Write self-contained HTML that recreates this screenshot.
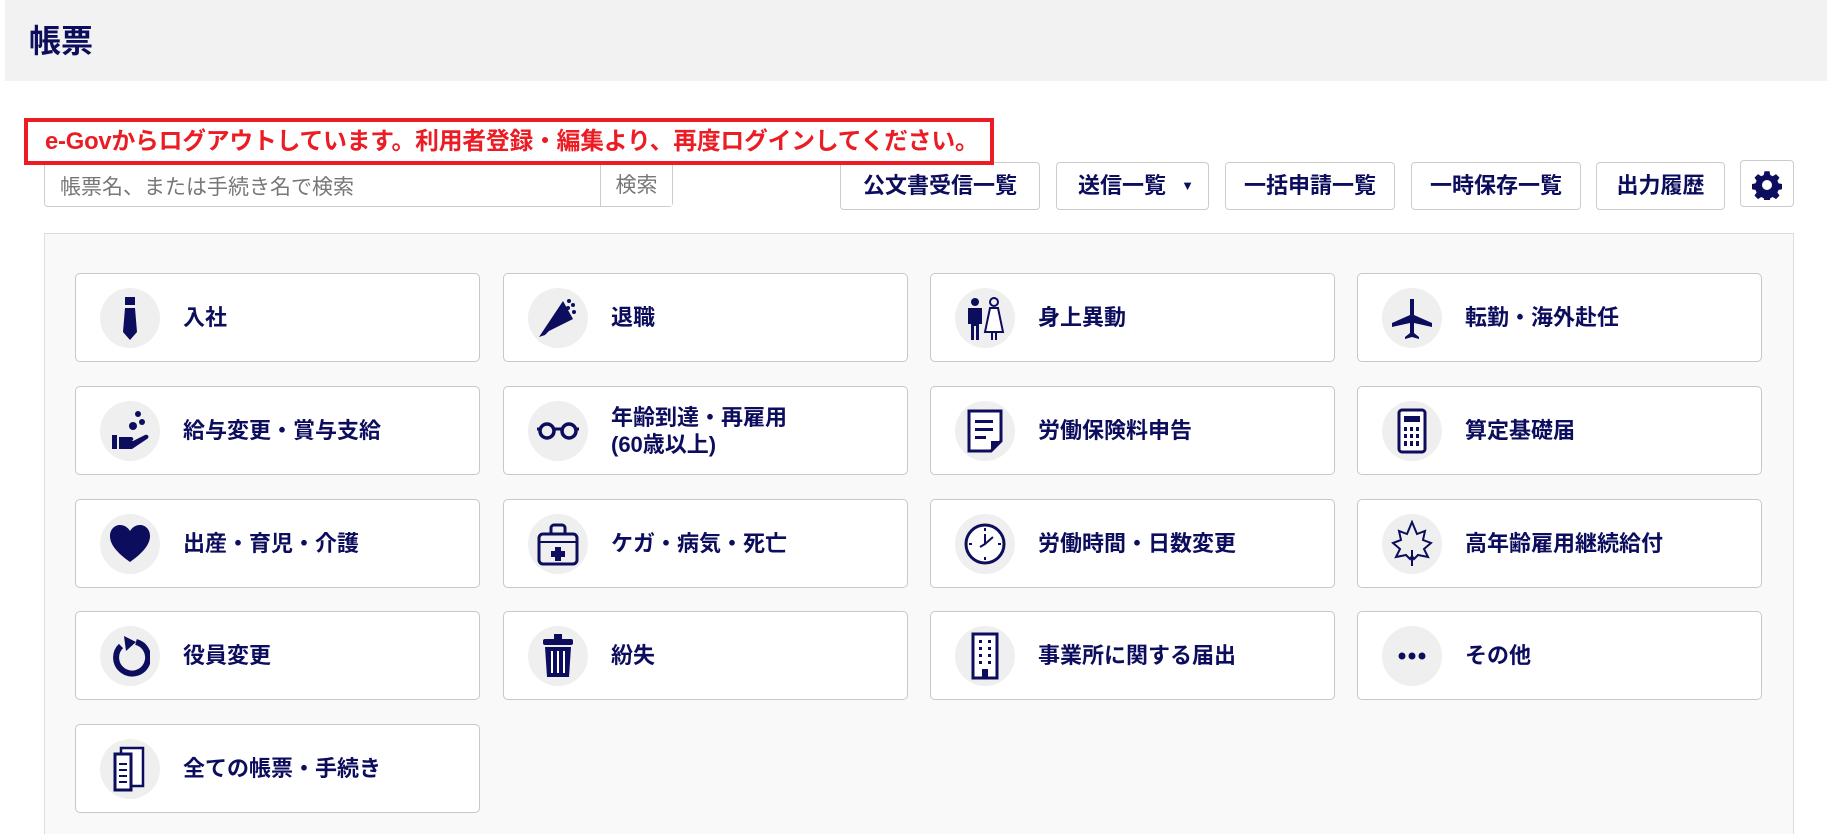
<!DOCTYPE html>
<html><head><meta charset="utf-8"><style>
*{box-sizing:border-box;margin:0;padding:0}
html,body{width:1827px;height:834px;overflow:hidden}
body{background:#fff;font-family:"Liberation Sans","Noto Sans CJK JP",sans-serif;color:#0d0d5e;position:relative}
.hdr{position:absolute;left:5px;top:0;width:1822px;height:81px;background:#f2f2f2}
.hdr h1{position:absolute;left:24px;top:16px;font-size:32px;font-weight:bold;color:#0d0d5e}
.err{position:absolute;left:24px;top:118px;width:970px;height:47px;border:4px solid #ec1c24;color:#ec1c24;font-weight:bold;font-size:23.8px;line-height:39px;padding-left:17px;white-space:nowrap;background:#fff;z-index:2;letter-spacing:-0.2px}
.search{position:absolute;left:44px;top:160px;width:629px;height:47px;border:1px solid #ccc;border-radius:4px;background:#fff}
.search .ph{position:absolute;left:15px;top:10px;font-size:21px;color:#777}
.search .b{position:absolute;left:555px;top:0;width:72px;height:45px;border-left:1px solid #ccc;background:#fff;font-size:21px;color:#777;text-align:center;line-height:50px}
.btn{position:absolute;top:162px;height:48px;border:1px solid #ccc;border-radius:4px;background:#fff;font-size:22px;font-weight:bold;text-align:center;line-height:46px;white-space:nowrap}
.panel{position:absolute;left:44px;top:233px;width:1750px;height:610px;background:#f9f9f9;border:1px solid #ddd}
.card{position:absolute;width:405px;height:89px;background:#fff;border:1px solid #c8c8c8;border-radius:5px}
.card .ic{position:absolute;left:24px;top:14px;width:60px;height:60px;border-radius:50%;background:#efefef;display:flex;align-items:center;justify-content:center}
.card .t{position:absolute;left:107px;top:0;height:87px;display:flex;align-items:center;font-size:22px;font-weight:bold;line-height:27px;white-space:nowrap}
svg{display:block}
</style></head><body>
<div class="hdr"><h1>帳票</h1></div>
<div class="err">e-Govからログアウトしています。利用者登録・編集より、再度ログインしてください。</div>
<div class="search"><span class="ph">帳票名、または手続き名で検索</span><div class="b">検索</div></div>
<div class="btn" style="left:840px;width:200px">公文書受信一覧</div>
<div class="btn" style="left:1056px;width:153px;text-align:left;padding-left:21px">送信一覧<span style="position:absolute;right:14px;top:0;font-size:13px">▼</span></div>
<div class="btn" style="left:1225px;width:170px">一括申請一覧</div>
<div class="btn" style="left:1411px;width:170px">一時保存一覧</div>
<div class="btn" style="left:1596px;width:129px">出力履歴</div>
<div class="btn" style="left:1740px;top:160px;width:54px;height:47px;padding-top:9px"><svg width="30" height="30" viewBox="0 0 24 24" style="margin:auto"><path fill="#0d0d5e" d="M10 1h4l.6 3 2 1 2.6-1.7 2.8 2.8-1.7 2.6 1 2 3 .6v4l-3 .6-1 2 1.7 2.6-2.8 2.8-2.6-1.7-2 1-.6 3h-4l-.6-3-2-1-2.6 1.7-2.8-2.8 1.7-2.6-1-2-3-.6v-4l3-.6 1-2-1.7-2.6 2.8-2.8 2.6 1.7 2-1zM12 8a4 4 0 100 8 4 4 0 000-8z"/></svg></div>
<div class="panel"></div>

<div class="card" style="left:75px;top:273px"><div class="ic"><svg width="30" height="46" viewBox="0 0 30 46"><rect x="10" y="2" width="10" height="8" fill="#0d0d5e"/><path d="M10 13h10l2 24-7 8-7-8z" fill="#0d0d5e"/></svg></div><div class="t">入社</div></div>
<div class="card" style="left:503px;top:273px"><div class="ic"><svg width="46" height="46" viewBox="0 0 46 46"><path d="M28 6 L8 36 L4 42 L10 40 L14 36 L38 24 Z" fill="#0d0d5e"/><circle cx="34" cy="6" r="2" fill="#0d0d5e"/><circle cx="38" cy="10" r="2" fill="#0d0d5e"/><circle cx="33" cy="13" r="2" fill="#0d0d5e"/><circle cx="39" cy="17" r="2" fill="#0d0d5e"/></svg></div><div class="t">退職</div></div>
<div class="card" style="left:930px;top:273px"><div class="ic"><svg width="44" height="48" viewBox="0 0 44 48"><circle cx="12" cy="8" r="4" fill="#0d0d5e"/><path d="M5 14h14v16h-3v16h-3V32h-2v14H8V30H5z" fill="#0d0d5e"/><circle cx="31" cy="8" r="4" fill="none" stroke="#0d0d5e" stroke-width="2"/><path d="M27 14h8l5 24H22z" fill="#fff" stroke="#0d0d5e" stroke-width="2"/><rect x="28" y="38" width="2" height="8" fill="#0d0d5e"/><rect x="32" y="38" width="2" height="8" fill="#0d0d5e"/></svg></div><div class="t">身上異動</div></div>
<div class="card" style="left:1357px;top:273px"><div class="ic"><svg width="46" height="46" viewBox="0 0 46 46"><path d="M21 4h4v16l18 8v4l-18-4v10l5 4v2l-7-2-7 2v-2l5-4V28L3 32v-4l18-8z" fill="#0d0d5e"/></svg></div><div class="t">転勤・海外赴任</div></div>

<div class="card" style="left:75px;top:386px"><div class="ic"><svg width="44" height="44" viewBox="0 0 44 44"><circle cx="30" cy="5" r="3" fill="#0d0d5e"/><circle cx="25" cy="17" r="4" fill="#0d0d5e"/><circle cx="34" cy="13" r="3" fill="#0d0d5e"/><rect x="4" y="26" width="5" height="14" fill="#0d0d5e"/><path d="M11 28h12c3 0 3 4 0 4h-7 9l12-6c3-1 5 2 2 4L24 40H11z" fill="#0d0d5e"/></svg></div><div class="t">給与変更・賞与支給</div></div>
<div class="card" style="left:503px;top:386px"><div class="ic"><svg width="44" height="20" viewBox="0 0 44 20"><circle cx="11" cy="10" r="7" fill="none" stroke="#0d0d5e" stroke-width="3.5"/><circle cx="33" cy="10" r="7" fill="none" stroke="#0d0d5e" stroke-width="3.5"/><path d="M18 8h8M1 8h3M40 8h3" stroke="#0d0d5e" stroke-width="3"/></svg></div><div class="t">年齢到達・再雇用<br>(60歳以上)</div></div>
<div class="card" style="left:930px;top:386px"><div class="ic"><svg width="40" height="46" viewBox="0 0 40 46"><path d="M4 3h32v30L26 43H4z" fill="#fff" stroke="#0d0d5e" stroke-width="3"/><path d="M26 43V33h10" fill="#0d0d5e"/><rect x="10" y="12" width="18" height="3" fill="#0d0d5e"/><rect x="10" y="20" width="18" height="3" fill="#0d0d5e"/><rect x="10" y="28" width="11" height="3" fill="#0d0d5e"/></svg></div><div class="t">労働保険料申告</div></div>
<div class="card" style="left:1357px;top:386px"><div class="ic"><svg width="30" height="46" viewBox="0 0 30 46"><rect x="2" y="2" width="26" height="42" rx="3" fill="#fff" stroke="#0d0d5e" stroke-width="3"/><rect x="7" y="8" width="16" height="6" fill="#0d0d5e"/><g fill="#0d0d5e"><rect x="7" y="19" width="3" height="4"/><rect x="13" y="19" width="3" height="4"/><rect x="19" y="19" width="3" height="4"/><rect x="7" y="26" width="3" height="4"/><rect x="13" y="26" width="3" height="4"/><rect x="19" y="26" width="3" height="4"/><rect x="7" y="33" width="3" height="5"/><rect x="13" y="33" width="3" height="5"/><rect x="19" y="33" width="3" height="5"/></g></svg></div><div class="t">算定基礎届</div></div>

<div class="card" style="left:75px;top:499px"><div class="ic"><svg width="44" height="40" viewBox="0 0 44 40"><path d="M22 38C8 28 2 20 2 12 2 5 7 1 12 1c5 0 8 3 10 6 2-3 5-6 10-6 5 0 10 4 10 11 0 8-6 16-20 26z" fill="#0d0d5e"/></svg></div><div class="t">出産・育児・介護</div></div>
<div class="card" style="left:503px;top:499px"><div class="ic"><svg width="44" height="44" viewBox="0 0 44 44"><rect x="3" y="12" width="38" height="30" rx="4" fill="none" stroke="#0d0d5e" stroke-width="3"/><path d="M15 12V6a3 3 0 013-3h8a3 3 0 013 3v6" fill="none" stroke="#0d0d5e" stroke-width="3"/><path d="M3 20h38" stroke="#0d0d5e" stroke-width="2"/><path d="M19 25h6v4h4v6h-4v4h-6v-4h-4v-6h4z" fill="#0d0d5e"/></svg></div><div class="t">ケガ・病気・死亡</div></div>
<div class="card" style="left:930px;top:499px"><div class="ic"><svg width="44" height="44" viewBox="0 0 44 44"><circle cx="22" cy="22" r="19" fill="#fff" stroke="#0d0d5e" stroke-width="3"/><path d="M22 6v3M22 35v3M6 22h3M35 22h3" stroke="#0d0d5e" stroke-width="2"/><path d="M22 12v10l-5 3M22 22l8-7" fill="none" stroke="#0d0d5e" stroke-width="2"/></svg></div><div class="t">労働時間・日数変更</div></div>
<div class="card" style="left:1357px;top:499px"><div class="ic"><svg width="44" height="48" viewBox="0 0 44 48"><path d="M22 2l5 12 8-3-2 9 8 3-7 6 4 8-10-2-4 4-2-3-2 3-4-4-10 2 4-8-7-6 8-3-2-9 8 3z M22 30v16" fill="none" stroke="#0d0d5e" stroke-width="2"/></svg></div><div class="t">高年齢雇用継続給付</div></div>

<div class="card" style="left:75px;top:611px"><div class="ic"><svg width="40" height="44" viewBox="0 0 40 44"><path d="M11 12A16 16 0 1 0 26 8" fill="none" stroke="#0d0d5e" stroke-width="6"/><path d="M14 2l12 6-10 9z" fill="#0d0d5e"/></svg></div><div class="t">役員変更</div></div>
<div class="card" style="left:503px;top:611px"><div class="ic"><svg width="34" height="46" viewBox="0 0 34 46"><rect x="13" y="1" width="8" height="5" fill="#0d0d5e"/><rect x="2" y="6" width="30" height="6" rx="2" fill="#0d0d5e"/><path d="M4 14h26l-2 30H6z" fill="#0d0d5e"/><path d="M11 18v22M17 18v22M23 18v22" stroke="#fff" stroke-width="2"/></svg></div><div class="t">紛失</div></div>
<div class="card" style="left:930px;top:611px"><div class="ic"><svg width="30" height="48" viewBox="0 0 30 48"><rect x="3" y="2" width="24" height="44" fill="#fff" stroke="#0d0d5e" stroke-width="3"/><g fill="#0d0d5e"><rect x="9" y="8" width="3" height="3"/><rect x="18" y="8" width="3" height="3"/><rect x="9" y="15" width="3" height="3"/><rect x="18" y="15" width="3" height="3"/><rect x="9" y="22" width="3" height="3"/><rect x="18" y="22" width="3" height="3"/><rect x="9" y="29" width="3" height="3"/><rect x="18" y="29" width="3" height="3"/><rect x="12" y="37" width="6" height="9"/></g></svg></div><div class="t">事業所に関する届出</div></div>
<div class="card" style="left:1357px;top:611px"><div class="ic"><svg width="30" height="10" viewBox="0 0 30 10"><circle cx="5" cy="5" r="3.5" fill="#0d0d5e"/><circle cx="15" cy="5" r="3.5" fill="#0d0d5e"/><circle cx="25" cy="5" r="3.5" fill="#0d0d5e"/></svg></div><div class="t">その他</div></div>

<div class="card" style="left:75px;top:724px"><div class="ic"><svg width="38" height="46" viewBox="0 0 38 46"><path d="M10 2h22v38H10z" fill="#fff" stroke="#0d0d5e" stroke-width="2.5"/><path d="M4 8h8l8 0v36H4z" fill="#fff" stroke="#0d0d5e" stroke-width="3"/><path d="M8 18h8M8 24h8M8 30h8M8 36h8" stroke="#0d0d5e" stroke-width="2"/></svg></div><div class="t">全ての帳票・手続き</div></div>
</body></html>
